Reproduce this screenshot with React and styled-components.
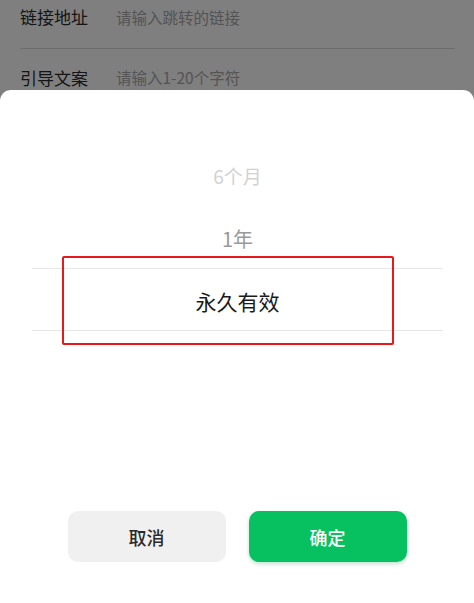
import React from "react";
import styled, { createGlobalStyle } from "styled-components";

const Global = createGlobalStyle`
  html, body { margin: 0; padding: 0; background: #fff; }
  body { font-family: "Noto Sans CJK SC", "Noto Sans", sans-serif; }
  * { box-sizing: border-box; }
`;

const Screen = styled.div`
  position: relative;
  width: 474px;
  height: 603px;
  overflow: hidden;
  background: #fff;
`;

const Form = styled.div`
  margin-top: -11px;
  padding: 0 19px 0 20px;
  display: flex;
  flex-direction: column;
`;

const Row = styled.div`
  height: 60px;
  padding-bottom: 4px;
  display: flex;
  align-items: center;
  border-bottom: ${(p) => (p.$last ? "none" : "1px solid #d8d8d8")};
`;

const Label = styled.div`
  width: 97px;
  font-size: 17px;
  color: #2a2a2a;
  flex-shrink: 0;
`;

const Placeholder = styled.div`
  font-size: 15.5px;
  color: #a8a8a8;
  margin-left: -1px;
`;

const Mask = styled.div`
  position: absolute;
  inset: 0;
  background: rgba(0, 0, 0, 0.5);
`;

const Sheet = styled.div`
  position: absolute;
  left: 0;
  right: 0;
  bottom: 0;
  height: 513px;
  background: #fff;
  border-radius: 11px 11px 0 0;
  display: flex;
  flex-direction: column;
`;

const Picker = styled.div`
  position: relative;
  margin: 52px 31px 0 32px;
  display: flex;
  flex-direction: column;
`;

const Item = styled.div`
  height: 63px;
  display: flex;
  align-items: center;
  justify-content: center;
  font-size: ${(p) => p.$size}px;
  color: ${(p) => p.$color};
  padding-top: 3px;
  border-top: ${(p) => (p.$selected ? "1px solid #e6e6e6" : "none")};
  border-bottom: ${(p) => (p.$selected ? "1px solid #e6e6e6" : "none")};
`;

const Highlight = styled.div`
  position: absolute;
  left: 30px;
  top: 114px;
  width: 332px;
  height: 89px;
  border: 2px solid #e8191c;
  border-radius: 2px;
  pointer-events: none;
`;

const Actions = styled.div`
  margin-top: auto;
  margin-bottom: 41px;
  display: flex;
  justify-content: center;
  gap: 23px;
`;

const Button = styled.button`
  width: 158px;
  height: 51px;
  border: none;
  border-radius: 10px;
  font-family: inherit;
  font-size: 18px;
  font-weight: 500;
  background: ${(p) => (p.$primary ? "#07c160" : "#f0f0f0")};
  color: ${(p) => (p.$primary ? "#fff" : "#2a2a2a")};
  box-shadow: ${(p) => (p.$primary ? "0 2px 4px rgba(7,140,70,0.25)" : "none")};
`;

export default function App() {
  return (
    <Screen>
      <Global />
      <Form>
        <Row>
          <Label>链接地址</Label>
          <Placeholder>请输入跳转的链接</Placeholder>
        </Row>
        <Row $last>
          <Label>引导文案</Label>
          <Placeholder>请输入1-20个字符</Placeholder>
        </Row>
      </Form>
      <Mask />
      <Sheet>
        <Picker>
          <Item $size={19} $color="#d2d2d2">6个月</Item>
          <Item $size={20} $color="#9a9a9a">1年</Item>
          <Item $size={21} $color="#1a1a1a" $selected>永久有效</Item>
          <Highlight />
        </Picker>
        <Actions>
          <Button>取消</Button>
          <Button $primary>确定</Button>
        </Actions>
      </Sheet>
    </Screen>
  );
}
